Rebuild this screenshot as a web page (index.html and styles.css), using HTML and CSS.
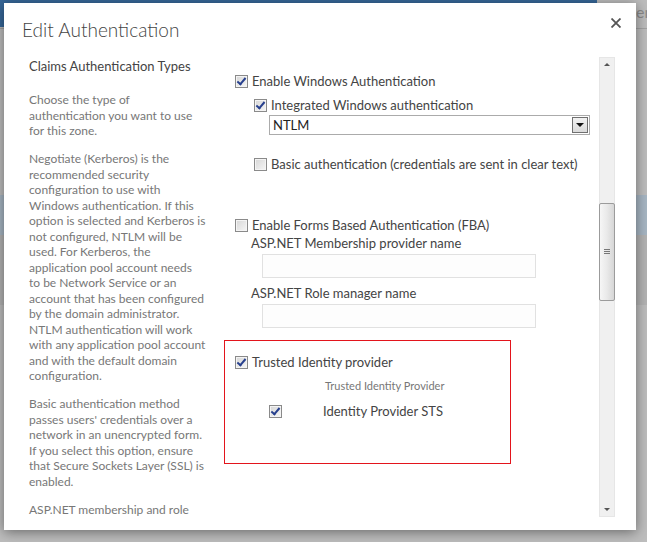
FILE: index.html
```html
<!DOCTYPE html>
<html lang="en">
    <head>
        <title>Edit Authentication</title>
        <link rel="stylesheet" href="styles.css">
    </head>

    <body>
        <div class="Backdrop">
            <span class="BackText1">em</span>
        </div>

        <div class="Dialog">
            <div class="DialogHeader">
                <h1 class="DialogTitle">Edit Authentication</h1>
                <span class="CloseBtn">
                    <svg width="10" height="10" viewBox="0 0 10 10"><path d="M0.5 0.5 L9.5 9.5 M9.5 0.5 L0.5 9.5" stroke="#555" stroke-width="1.8" fill="none"/></svg>
                </span>
            </div>

            <div class="DialogBody">
                <div class="Content">
                    <div class="Desc">
                        <h3 class="SectionTitle">Claims Authentication Types</h3>
                        <p>Choose the type of<br>authentication you want to use<br>for this zone.</p>
                        <p>Negotiate (Kerberos) is the<br>recommended security<br>configuration to use with<br>Windows authentication. If this<br>option is selected and Kerberos is<br>not configured, NTLM will be<br>used. For Kerberos, the<br>application pool account needs<br>to be Network Service or an<br>account that has been configured<br>by the domain administrator.<br>NTLM authentication will work<br>with any application pool account<br>and with the default domain<br>configuration.</p>
                        <p>Basic authentication method<br>passes users' credentials over a<br>network in an unencrypted form.<br>If you select this option, ensure<br>that Secure Sockets Layer (SSL) is<br>enabled.</p>
                        <p>ASP.NET membership and role</p>
                    </div>

                    <div class="Controls">
                        <div class="Row WinRow">
                            <span class="Cb Checked"></span>Enable Windows Authentication
                        </div>
                        <div class="Row SubRow">
                            <span class="Cb Checked"></span>Integrated Windows authentication
                        </div>
                        <div class="Select">
                            <span>NTLM</span>
                            <span class="SelectArrow"></span>
                        </div>
                        <div class="Row SubRow BasicRow">
                            <span class="Cb"></span>Basic authentication (credentials are sent in clear text)
                        </div>

                        <div class="Row FbaRow">
                            <span class="Cb"></span>Enable Forms Based Authentication (FBA)
                        </div>
                        <div class="FieldLabel">ASP.NET Membership provider name</div>
                        <div class="TextBox"></div>
                        <div class="FieldLabel RoleLabel">ASP.NET Role manager name</div>
                        <div class="TextBox"></div>

                        <div class="TrustedBox">
                            <div class="Row">
                                <span class="Cb Checked"></span>Trusted Identity provider
                            </div>
                            <div class="SmallTitle">Trusted Identity Provider</div>
                            <div class="StsRow">
                                <span class="Cb Checked"></span>
                                <span class="StsName">Identity Provider STS</span>
                            </div>
                        </div>
                    </div>
                </div>

                <div class="ScrollBar">
                    <span class="ArrowUp"></span>
                    <div class="Thumb">
                        <span class="Grip"></span>
                    </div>
                    <span class="ArrowDown"></span>
                </div>
            </div>
        </div>
    </body>
</html>
```

FILE: styles.css
```css
body{
    margin: 0;
    width: 647px;
    height: 542px;
    overflow: hidden;
    font-family: Lato, "Open Sans", sans-serif;
    background:
        linear-gradient(#37689a, #37689a) 0 0 / 597px 27px no-repeat,
        linear-gradient(#a3a3a3, #a3a3a3) 0 28px / 100% 1px no-repeat,
        linear-gradient(#a7b6c3, #a7b6c3) 0 195px / 100% 40px no-repeat,
        linear-gradient(#b3b3b3, #b3b3b3) 0 235px / 100% 70px no-repeat,
        #bdbdbd;
}

.Backdrop{
    height: 542px;
    color: #8a8a8a;
    font-size: 16px;
}

.BackText1{
    position: absolute;
    left: 636px;
    top: 2px;
}

.Dialog{
    position: absolute;
    left: 4px;
    top: 3px;
    width: 632px;
    height: 527px;
    background: white;
    box-shadow: 0 2px 12px rgba(0, 0, 0, 0.45);
    color: #444;
}

.DialogHeader{
    height: 54px;
    display: flex;
    justify-content: space-between;
    align-items: flex-start;
}

.DialogTitle{
    margin: 14px 0 0 18px;
    font-size: 19px;
    line-height: 26px;
    font-weight: 300;
    color: #444;
}

.CloseBtn{
    margin: 15px 15px 0 0;
    width: 10px;
    height: 10px;
    display: flex;
}

.DialogBody{
    height: 460px;
    display: flex;
}

.Content{
    flex: 1;
    display: flex;
    overflow: hidden;
}

.Desc{
    flex: 0 0 180px;
    margin-left: 25px;
}

.SectionTitle{
    margin: 0;
    font-size: 13px;
    line-height: 18px;
    font-weight: normal;
    color: #444;
}

.Desc p{
    margin: 12.5px 0 0 0;
    font-size: 12px;
    line-height: 15.5px;
    color: #777;
    white-space: nowrap;
}

.Desc h3 + p{
    margin-top: 17px;
}

.Controls{
    margin-left: 15px;
    flex: 1;
    font-size: 13px;
}

.Row{
    display: flex;
    align-items: center;
    height: 18px;
    padding-left: 11px;
    white-space: nowrap;
}

.WinRow{
    margin-top: 15px;
}

.SubRow{
    margin-top: 6px;
    padding-left: 30px;
}

.BasicRow{
    margin-top: 20px;
}

.FbaRow{
    margin-top: 43px;
}

.Cb{
    flex: 0 0 auto;
    width: 11px;
    height: 11px;
    margin-right: 4px;
    border: 1px solid #8a8a8a;
    background: linear-gradient(135deg, #d6d6d6, #f6f6f6);
    box-shadow: inset 0 0 0 1px #f4f4f4;
    position: relative;
}

.Checked::after{
    content: "";
    position: absolute;
    left: 3px;
    top: 0px;
    width: 3px;
    height: 7px;
    border: solid #27408e;
    border-width: 0 2px 2px 0;
    transform: rotate(40deg);
}

.Select{
    margin: 1px 0 0 45px;
    width: 316px;
    height: 18px;
    border: 1px solid #ababab;
    display: flex;
    align-items: center;
    justify-content: space-between;
    padding-left: 3px;
    box-sizing: content-box;
    font-size: 13px;
    color: #222;
}

.SelectArrow{
    width: 14px;
    height: 14px;
    margin-right: 1px;
    border: 1px solid #707070;
    background: linear-gradient(#f2f2f2, #dadada);
    position: relative;
}

.SelectArrow::after{
    content: "";
    position: absolute;
    left: 3px;
    top: 5px;
    border-left: 4px solid transparent;
    border-right: 4px solid transparent;
    border-top: 4px solid #111;
}

.FieldLabel{
    padding-left: 27px;
    height: 18px;
    line-height: 18px;
}

.RoleLabel{
    margin-top: 6px;
}

.TextBox{
    margin: 2px 0 0 38px;
    width: 272px;
    height: 22px;
    border: 1px solid #e1e1e1;
    background: #fdfdfd;
}

.TrustedBox{
    margin-top: 12px;
    width: 287px;
    height: 124px;
    border: 1px solid #e3141c;
    padding-top: 12px;
    box-sizing: border-box;
}

.TrustedBox .Row{
    padding-left: 10px;
}

.SmallTitle{
    margin: 7px 0 0 100px;
    font-size: 11px;
    line-height: 15px;
    color: #777;
}

.StsRow{
    margin-top: 9px;
    height: 18px;
    display: flex;
    align-items: center;
    padding-left: 44px;
}

.StsRow .Cb{
    margin-right: 41px;
}

.StsName{
    font-size: 13px;
}

.ScrollBar{
    flex: 0 0 14px;
    margin-right: 21px;
    border: 1px solid #e6e6e6;
    background: #f0f0f0;
    position: relative;
}

.ArrowUp{
    position: absolute;
    left: 4px;
    top: 5px;
    border-left: 3px solid transparent;
    border-right: 3px solid transparent;
    border-bottom: 3px solid #555;
}

.ArrowDown{
    position: absolute;
    left: 4px;
    bottom: 5px;
    border-left: 3px solid transparent;
    border-right: 3px solid transparent;
    border-top: 3px solid #555;
}

.Thumb{
    position: absolute;
    left: -1px;
    top: 145px;
    width: 14px;
    height: 96px;
    border: 1px solid #9b9b9b;
    border-radius: 2px;
    background: linear-gradient(to right, #f6f6f6, #e9e9e9 50%, #d6d6d6);
}

.Grip{
    position: absolute;
    left: 4px;
    top: 45px;
    width: 6px;
    height: 5px;
    background: repeating-linear-gradient(#777 0 1px, transparent 1px 2px);
}
```
